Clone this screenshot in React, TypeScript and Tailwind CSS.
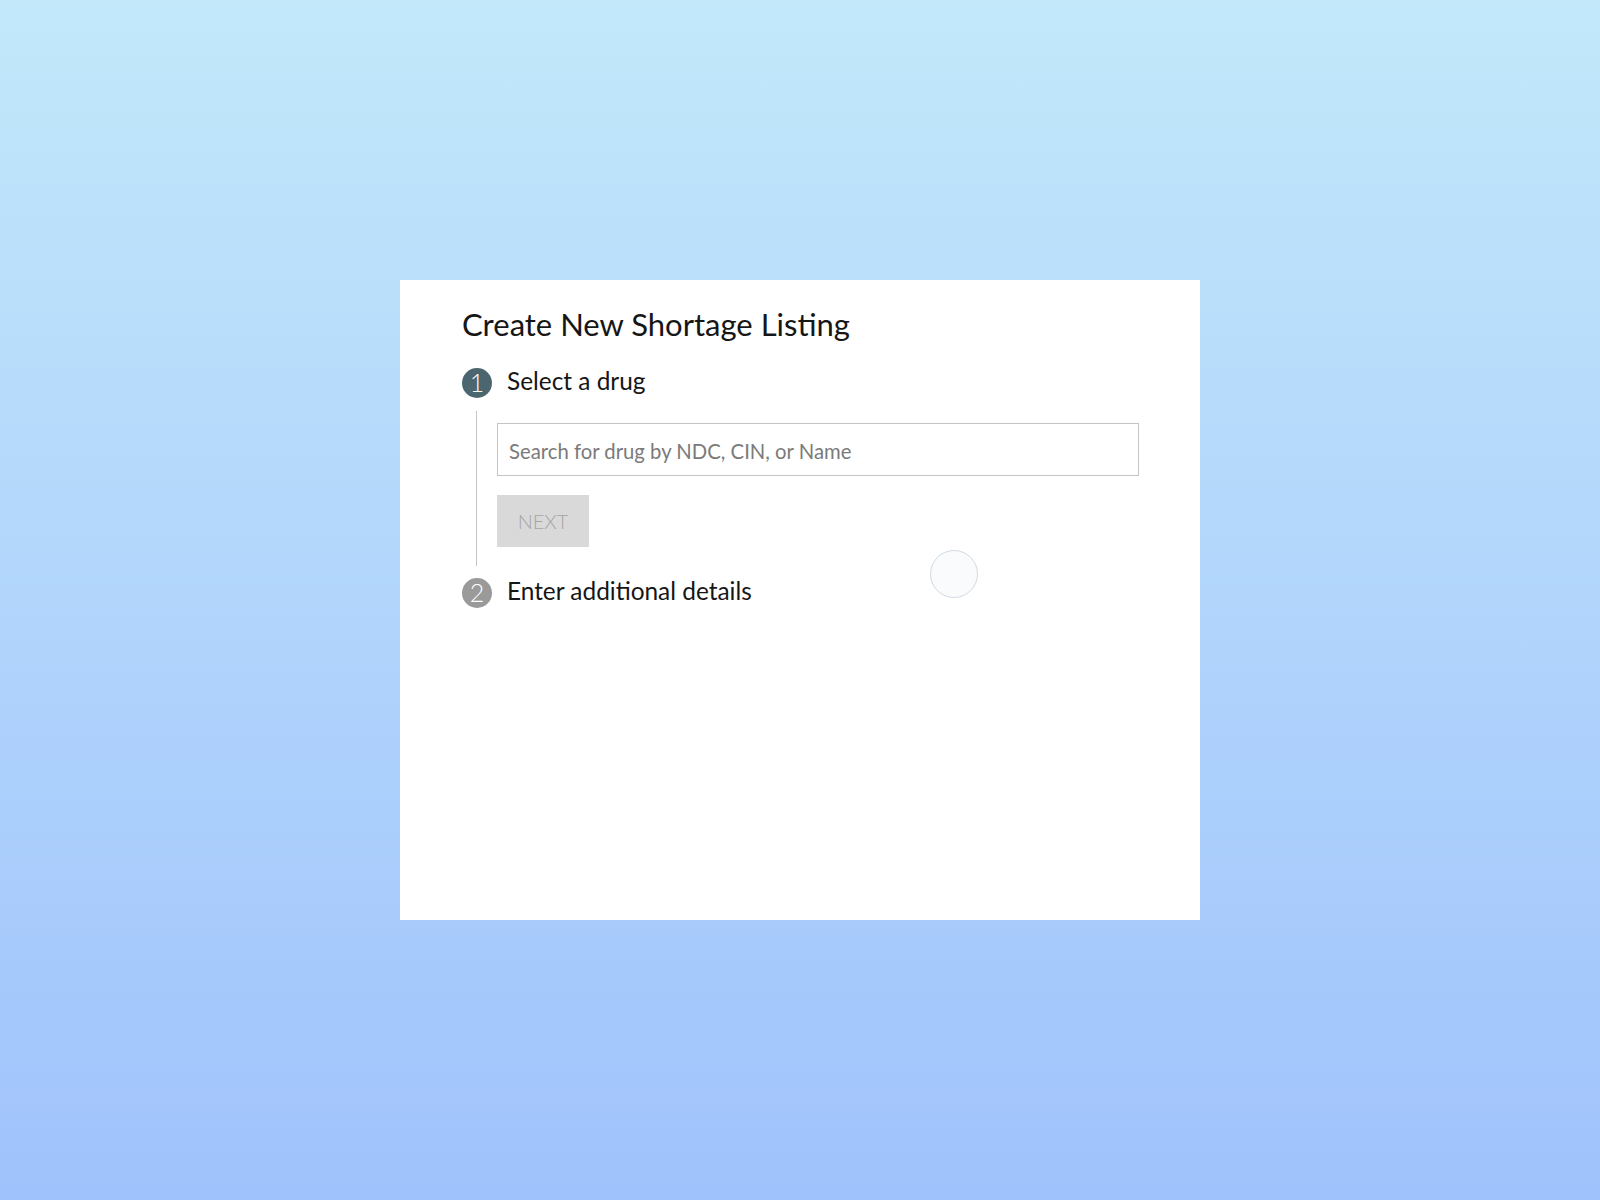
import React from "react";

export default function App() {
  return (
    <div
      className="w-full min-h-[1200px] flex items-center justify-center bg-gradient-to-b from-[#c2e8fa] to-[#a0c2fc]"
      style={{ fontFamily: "Lato, 'Noto Sans', sans-serif" }}
    >
      <div className="relative w-[800px] h-[640px] bg-white pl-[62px] pr-[61px] pt-[26px]">
        <h1 className="text-[31px] leading-[37px] text-[#161616] font-normal">
          Create New Shortage Listing
        </h1>

        <div className="mt-[25px] flex items-center h-[30px]">
          <div className="w-[30px] h-[30px] rounded-full bg-[#4c6670] text-white flex items-center justify-center text-[25px] leading-none font-light">
            <span className="-translate-y-[1px]">1</span>
          </div>
          <span className="ml-[15px] text-[24.4px] leading-[30px] text-[#161616] -translate-y-[2px]">
            Select a drug
          </span>
        </div>

        <div className="ml-[14px] mt-[13px] mb-[12px] border-l border-[#c4c4c4] pl-[20px] pt-[12px] pb-[19px]">
          <div className="h-[53px] border border-[#c4c4c4] flex items-center pl-[11px]">
            <span className="text-[20.3px] text-[#7a7a7a] translate-y-[2px]">
              Search for drug by NDC, CIN, or Name
            </span>
          </div>
          <div className="mt-[19px] w-[92px] h-[52px] bg-[#d9d9d9] flex items-center justify-center text-[20px] text-[#a5a5a5] font-light">
            NEXT
          </div>
        </div>

        <div className="flex items-center h-[30px]">
          <div className="w-[30px] h-[30px] rounded-full bg-[#9a9a9a] text-white flex items-center justify-center text-[25px] leading-none font-light">
            <span className="-translate-y-[1px]">2</span>
          </div>
          <span className="ml-[15px] text-[24.4px] leading-[30px] text-[#161616] -translate-y-[2px]">
            Enter additional details
          </span>
        </div>

        <div className="absolute left-[530px] top-[270px] w-[48px] h-[48px] rounded-full border border-[#d2dae2] bg-[#f6f8fb]/60" />
      </div>
    </div>
  );
}
